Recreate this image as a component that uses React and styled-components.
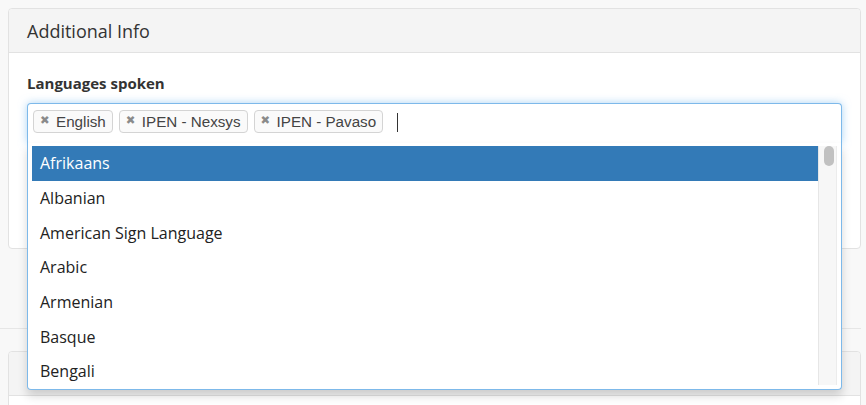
import React from "react";
import styled, { createGlobalStyle } from "styled-components";

const GlobalStyle = createGlobalStyle`
  html, body { margin: 0; padding: 0; }
  body {
    background: #f8f8f8;
    font-family: "Open Sans", "Liberation Sans", sans-serif;
    color: #333;
  }
`;

const Page = styled.div`
  padding: 8px 5px 0 8px;
  height: 405px;
  box-sizing: border-box;
  overflow: hidden;
`;

const Panel = styled.section`
  background: #fff;
  border: 1px solid #e2e2e2;
  border-radius: 4px;
`;

const PanelHeader = styled.div`
  height: 43px;
  display: flex;
  align-items: center;
  padding: 0 18px;
  background: #f4f4f4;
  border-bottom: 1px solid #e2e2e2;
  border-radius: 4px 4px 0 0;
  font-size: 18px;
  color: #333;
`;

const PanelBody = styled.div`
  height: ${(p) => p.$h}px;
  box-sizing: border-box;
  padding: 20px 18px;
`;

const Label = styled.label`
  display: block;
  font-size: 15px;
  font-weight: 700;
  line-height: 20px;
  margin-bottom: 10px;
  color: #333;
`;

const SelectWrap = styled.div`
  position: relative;
`;

const Control = styled.div`
  height: 40px;
  box-sizing: border-box;
  border: 1px solid #7db9ea;
  border-bottom: none;
  border-radius: 4px 4px 0 0;
  box-shadow: 0 0 8px rgba(102, 175, 233, 0.55);
  background: #fff;
  padding: 6px 5px 0;
  display: flex;
  align-items: flex-start;
  gap: 6px;
`;

const Tag = styled.span`
  height: 23px;
  box-sizing: border-box;
  display: inline-flex;
  align-items: center;
  gap: 7px;
  padding: 0 6px;
  border: 1px solid #d4d4d4;
  border-radius: 4px;
  background: #fafafa;
  font-family: "Liberation Sans", Arial, sans-serif;
  font-size: 15.2px;
  color: #444;
  white-space: nowrap;
`;

const Remove = styled.span`
  font-family: "DejaVu Sans", sans-serif;
  font-size: 11.5px;
  font-weight: 700;
  color: #8a8a8a;
  width: 9px;
  margin-top: -3px;
  text-align: center;
`;

const Caret = styled.span`
  width: 1px;
  height: 19px;
  margin: 3px 0 0 8px;
  background: #333;
`;

const Menu = styled.div`
  position: absolute;
  top: 100%;
  left: 0;
  right: 0;
  z-index: 5;
  background: #fff;
  border: 1px solid #7db9ea;
  border-top: none;
  border-radius: 0 0 4px 4px;
  padding: 3px 4px 4px;
  box-shadow: 0 6px 10px rgba(0, 0, 0, 0.16);
`;

const List = styled.div`
  display: flex;
  height: 239px;
  overflow: hidden;
`;

const Options = styled.ul`
  flex: 1;
  margin: 0;
  padding: 0;
  list-style: none;
`;

const Option = styled.li`
  height: 34.67px;
  display: flex;
  align-items: center;
  padding-left: 8px;
  font-size: 16px;
  color: ${(p) => (p.$active ? "#fff" : "#222")};
  background: ${(p) => (p.$active ? "#337ab7" : "transparent")};
`;

const Track = styled.div`
  width: 17px;
  background: #f7f7f7;
  border-left: 1px solid #e6e6e6;
  border-right: 1px solid #ececec;
  display: flex;
  justify-content: center;
`;

const Thumb = styled.div`
  width: 10px;
  height: 20px;
  margin-left: 2px;
  border-radius: 5px;
  background: #c1c1c1;
`;

const Separator = styled.hr`
  margin: 79px 0 22px -8px;
  border: none;
  border-top: 1px solid #e6e6e6;
`;

const tags = ["English", "IPEN - Nexsys", "IPEN - Pavaso"];
const languages = [
  "Afrikaans",
  "Albanian",
  "American Sign Language",
  "Arabic",
  "Armenian",
  "Basque",
  "Bengali",
];

export default function App() {
  return (
    <>
      <GlobalStyle />
      <Page>
        <Panel>
          <PanelHeader>Additional Info</PanelHeader>
          <PanelBody $h={195}>
            <Label>Languages spoken</Label>
            <SelectWrap>
              <Control>
                {tags.map((t) => (
                  <Tag key={t}>
                    <Remove>✖</Remove>
                    {t}
                  </Tag>
                ))}
                <Caret />
              </Control>
              <Menu>
                <List>
                  <Options>
                    {languages.map((l, i) => (
                      <Option key={l} $active={i === 0}>
                        {l}
                      </Option>
                    ))}
                  </Options>
                  <Track>
                    <Thumb />
                  </Track>
                </List>
              </Menu>
            </SelectWrap>
          </PanelBody>
        </Panel>
        <Separator />
        <Panel>
          <PanelHeader>&nbsp;</PanelHeader>
          <PanelBody $h={60} />
        </Panel>
      </Page>
    </>
  );
}
